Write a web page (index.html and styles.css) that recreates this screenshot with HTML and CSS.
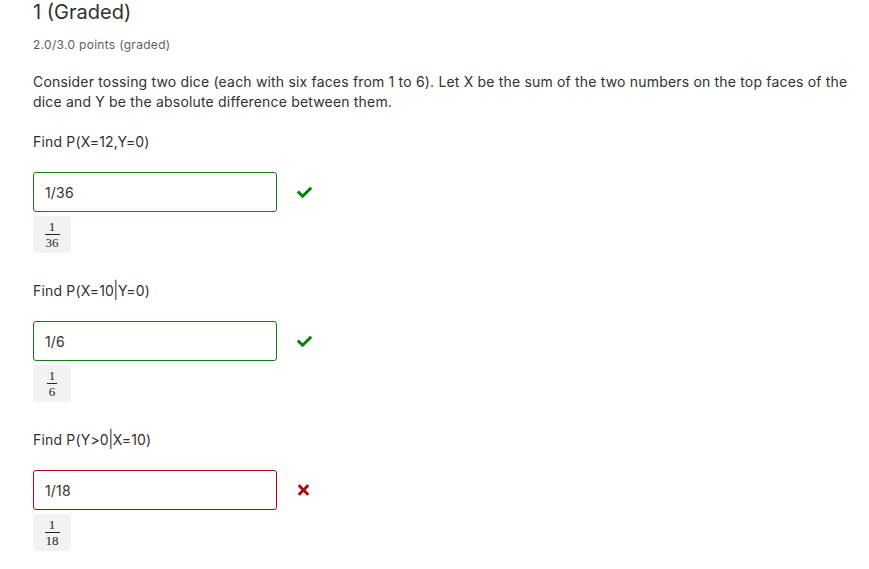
FILE: index.html
```html
<!DOCTYPE html>
<html>
<head>
    <title>1 (Graded)</title>
    <link rel="stylesheet" href="styles.css">
</head>
<body>
    <div class="problem">
        <h2 class="problem-title">1 (Graded)</h2>
        <div class="problem-progress">2.0/3.0 points (graded)</div>

        <p class="problem-text">Consider tossing two dice (each with six faces from 1 to 6). Let X be the sum of the two numbers on the top faces of the dice and Y be the absolute difference between them.</p>

        <div class="question">
            <p class="question-label">Find P(X=12,Y=0)</p>
            <div class="answer-row">
                <input type="text" class="answer correct" value="1/36">
                <span class="status">
                    <svg class="icon-check" viewBox="0 0 512 512"><path d="M173.898 439.404l-166.4-166.4c-9.997-9.997-9.997-26.206 0-36.204l36.203-36.204c9.997-9.998 26.207-9.998 36.204 0L192 312.69 432.095 72.596c9.997-9.997 26.207-9.997 36.204 0l36.203 36.204c9.997 9.997 9.997 26.206 0 36.204l-294.4 294.401c-9.998 9.997-26.207 9.997-36.204-.001z"/></svg>
                </span>
            </div>
            <div class="preview">
                <span class="frac"><span class="num">1</span><span class="den">36</span></span>
            </div>
        </div>

        <div class="question">
            <p class="question-label">Find P(X=10<span class="bar">|</span>Y=0)</p>
            <div class="answer-row">
                <input type="text" class="answer correct" value="1/6">
                <span class="status">
                    <svg class="icon-check" viewBox="0 0 512 512"><path d="M173.898 439.404l-166.4-166.4c-9.997-9.997-9.997-26.206 0-36.204l36.203-36.204c9.997-9.998 26.207-9.998 36.204 0L192 312.69 432.095 72.596c9.997-9.997 26.207-9.997 36.204 0l36.203 36.204c9.997 9.997 9.997 26.206 0 36.204l-294.4 294.401c-9.998 9.997-26.207 9.997-36.204-.001z"/></svg>
                </span>
            </div>
            <div class="preview">
                <span class="frac"><span class="num">1</span><span class="den">6</span></span>
            </div>
        </div>

        <div class="question">
            <p class="question-label">Find P(Y&gt;0<span class="bar">|</span>X=10)</p>
            <div class="answer-row">
                <input type="text" class="answer incorrect" value="1/18">
                <span class="status">
                    <svg class="icon-times" viewBox="0 0 352 512"><path d="M242.72 256l100.07-100.07c12.28-12.28 12.28-32.19 0-44.48l-22.24-22.24c-12.28-12.28-32.19-12.28-44.48 0L176 189.280 75.930 89.210c-12.280-12.280-32.190-12.280-44.480 0L9.210 111.450c-12.280 12.280-12.280 32.190 0 44.480L109.280 256 9.210 356.070c-12.280 12.280-12.280 32.190 0 44.480l22.240 22.240c12.280 12.280 32.200 12.280 44.480 0L176 322.720l100.070 100.070c12.280 12.280 32.200 12.280 44.480 0l22.240-22.240c12.280-12.280 12.280-32.190 0-44.480L242.720 256z"/></svg>
                </span>
            </div>
            <div class="preview">
                <span class="frac"><span class="num">1</span><span class="den">18</span></span>
            </div>
        </div>
    </div>
</body>
</html>
```

FILE: styles.css
```css
* {
    margin: 0;
    padding: 0;
    box-sizing: border-box;
}

body {
    font-family: Inter, 'Open Sans', sans-serif;
    background-color: #ffffff;
    color: #313131;
}

.problem {
    padding: 0 14px 0 33px;
}

.problem-title {
    font-size: 20px;
    font-weight: 400;
    line-height: 24px;
    color: #313131;
}

.problem-progress {
    margin-top: 12px;
    font-size: 12px;
    line-height: 18px;
    letter-spacing: 0.3px;
    color: #5e5e5e;
}

.problem-text {
    margin-top: 18px;
    font-size: 14px;
    line-height: 20px;
    letter-spacing: 0.18px;
}

.question {
    margin-top: 20px;
}

.question + .question {
    margin-top: 28px;
}

.question-label {
    font-size: 14px;
    line-height: 20px;
    letter-spacing: 0.18px;
}

.bar {
    display: inline-block;
    font-size: 17px;
    line-height: 14px;
    transform: scaleX(0.8);
    margin: 0 -1px;
}

.answer-row {
    display: flex;
    align-items: center;
    gap: 20px;
    margin-top: 20px;
}

.answer {
    width: 244px;
    height: 40px;
    padding: 0 11px;
    font-family: Inter, 'Open Sans', sans-serif;
    font-size: 14px;
    letter-spacing: 0.18px;
    color: #313131;
    background-color: #ffffff;
    border: 1px solid #c8c8c8;
    border-radius: 3px;
    outline: none;
}

.answer.correct {
    border-color: #0f7d15;
}

.answer.incorrect {
    border-color: #b20610;
}

.status {
    display: flex;
    align-items: center;
    height: 16px;
}

.icon-check {
    width: 15px;
    height: 15px;
    fill: #008100;
}

.icon-times {
    width: 13px;
    height: 16px;
    fill: #b20610;
}

.preview {
    display: flex;
    justify-content: center;
    align-items: center;
    width: 38px;
    height: 37px;
    margin-top: 4px;
    background-color: #f2f2f2;
    border-radius: 2px;
}

.frac {
    display: inline-flex;
    flex-direction: column;
    align-items: center;
    font-family: 'Liberation Serif', serif;
    font-size: 13px;
    line-height: 12px;
    color: #222222;
}

.frac .num {
    padding: 0 2px 1px;
}

.frac .den {
    align-self: stretch;
    text-align: center;
    padding: 2px 1px 0;
    border-top: 1px solid #222222;
}
```
